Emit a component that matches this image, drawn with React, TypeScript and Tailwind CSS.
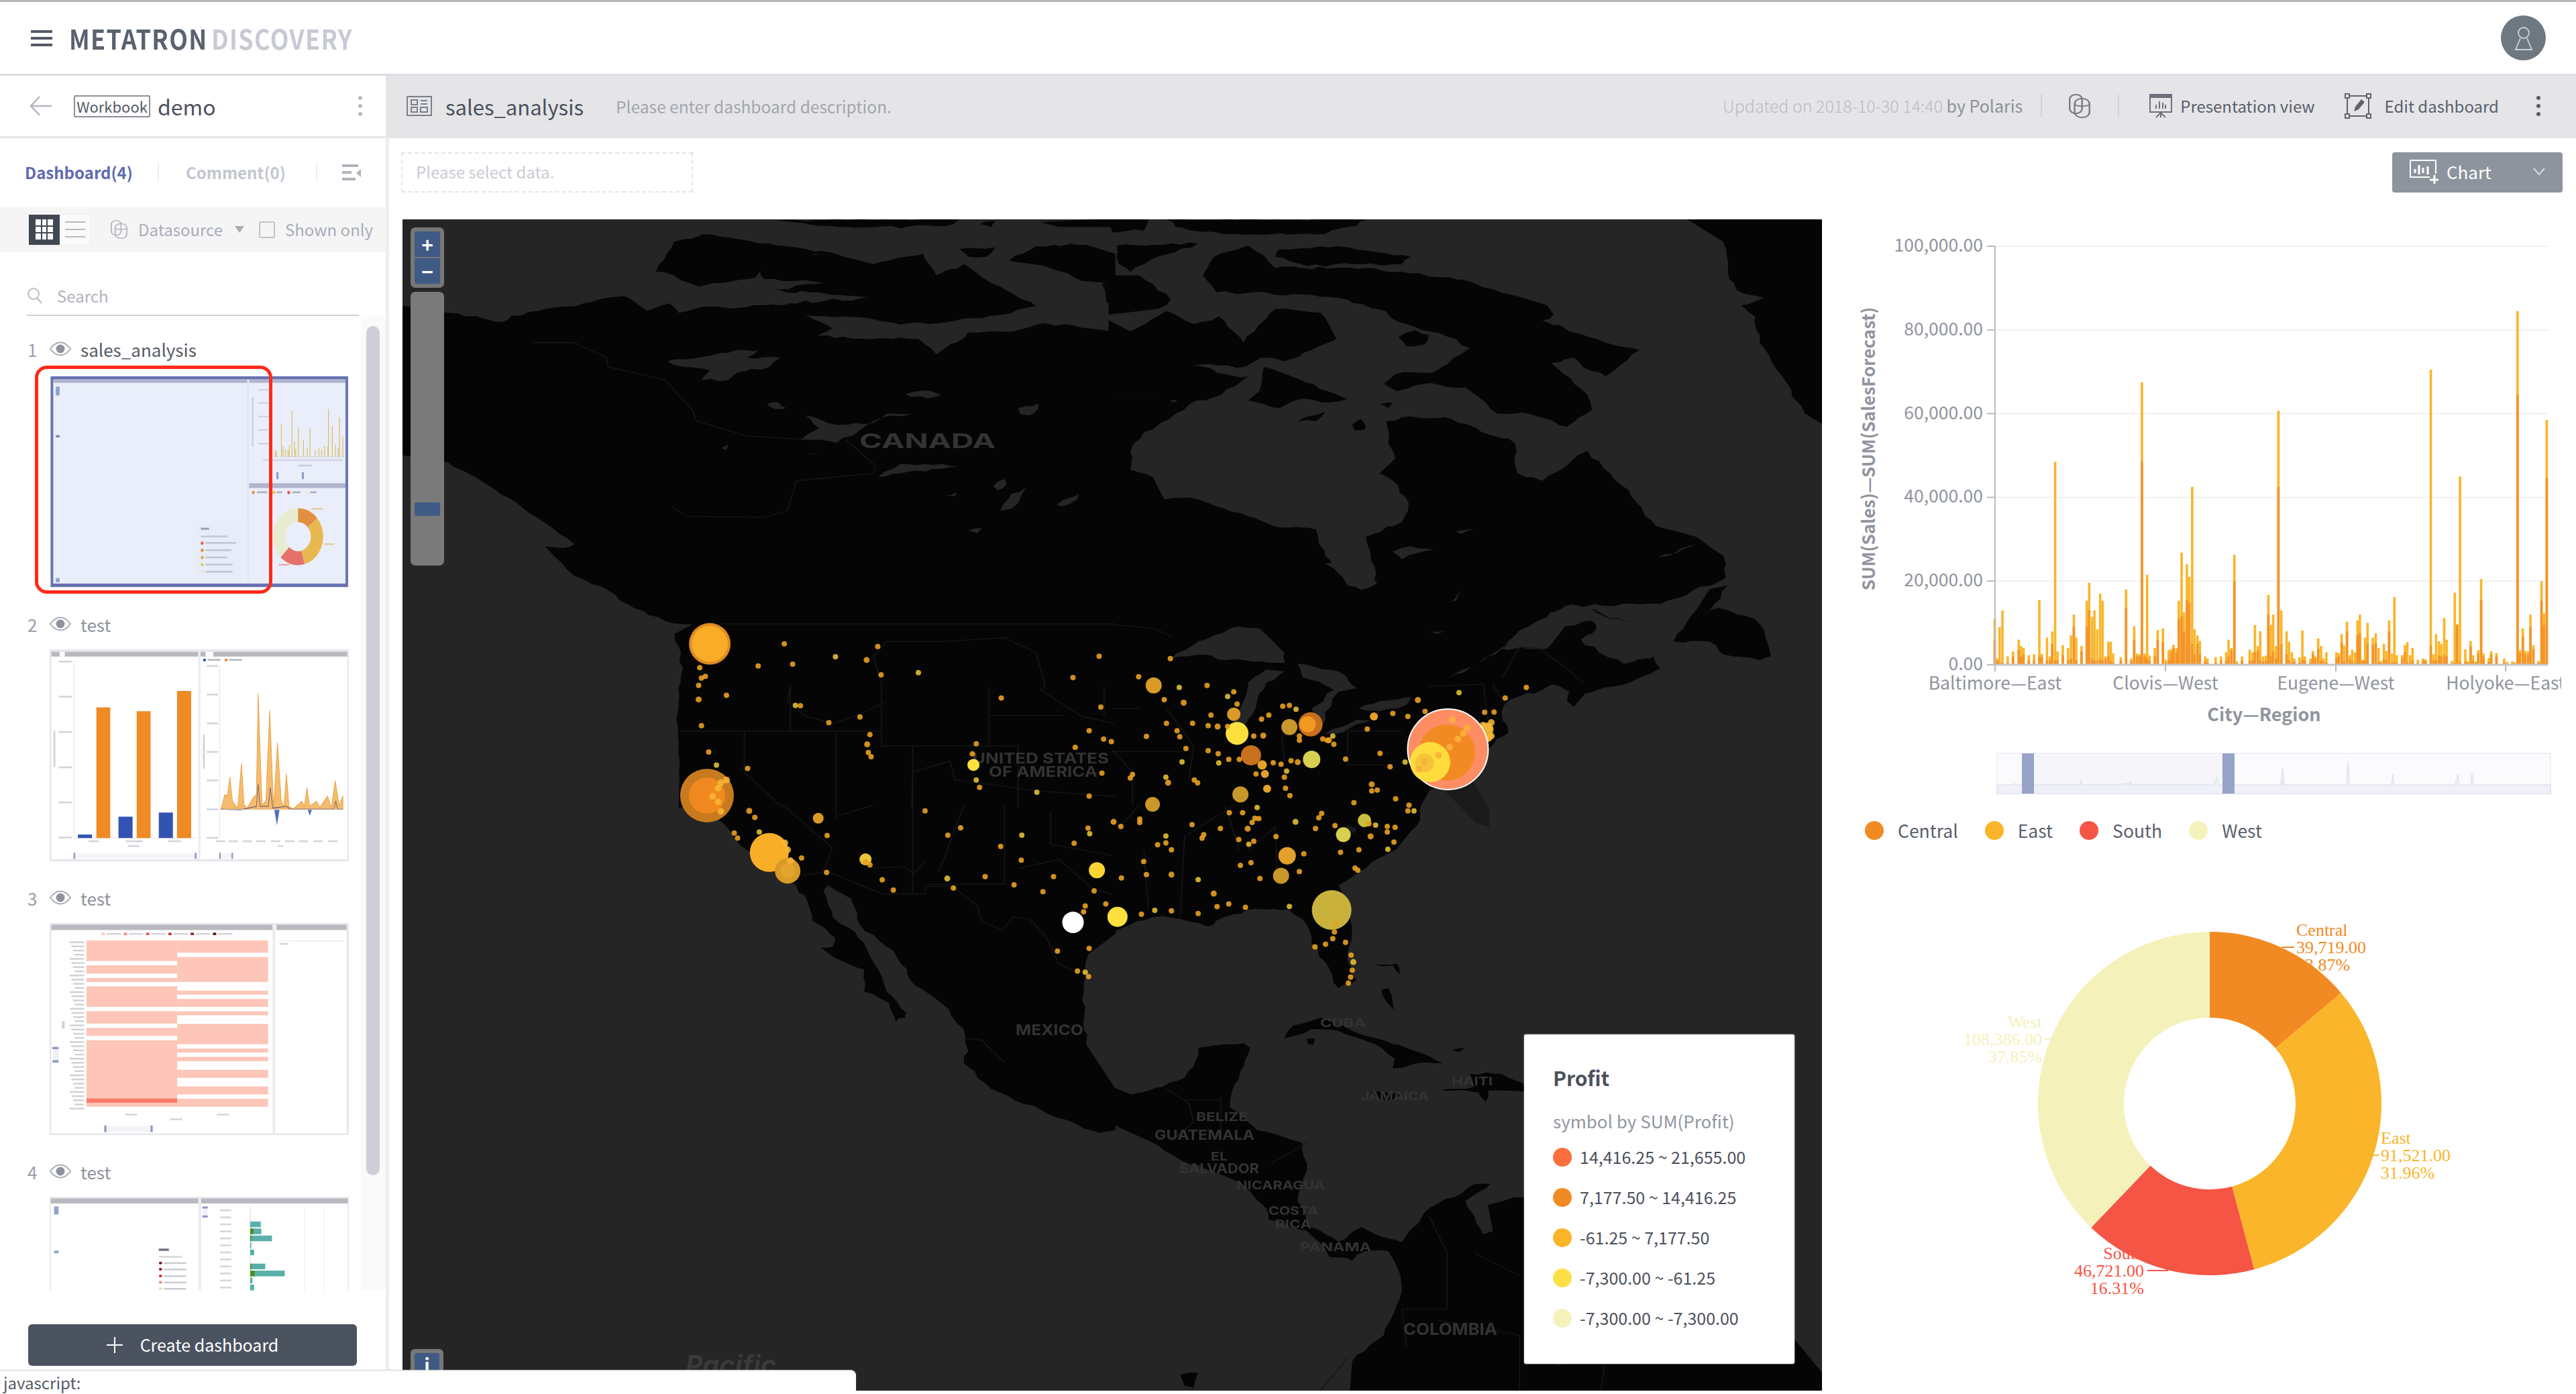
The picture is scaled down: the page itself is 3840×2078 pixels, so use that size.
import React from "react";

/* ---------- small icons ---------- */
const Kebab = ({ c = "#b9bcc4" }: { c?: string }) => (
  <svg width="10" height="30" viewBox="0 0 10 30"><circle cx="5" cy="3" r="3" fill={c} /><circle cx="5" cy="15" r="3" fill={c} /><circle cx="5" cy="27" r="3" fill={c} /></svg>
);
const Eye = () => (
  <svg width="32" height="22" viewBox="0 0 32 22" fill="none"><path d="M1 11C6 4 11 1.500 16 1.500S26 4 31 11C26 18 21 20.500 16 20.500S6 18 1 11Z" stroke="#a9adb6" strokeWidth="2" /><circle cx="16" cy="11" r="6.500" fill="#8e929c" /></svg>
);
const Cyl = ({ c, w = 26, h = 36 }: { c: string; w?: number; h?: number }) => (
  <svg width={w} height={h} viewBox="0 0 26 36" preserveAspectRatio="none" fill="none" stroke={c} strokeWidth="2"><rect x="1" y="1" width="15" height="28" rx="7" /><rect x="7" y="7" width="18" height="28" rx="8" fill="none" /><path d="M7 16c4 3 14 3 18 0" /></svg>
);

/* ---------- map data: traced per quadrant, in the coordinates of a 1568x1568 tracing ---------- */
const Q1_LAND = [
  "M-8 230 100 250 220 275 240 258 300 245 400 225 490 205 540 245 590 225 610 250 660 235 760 235 850 228 900 262 950 292 915 312 1060 318 1140 320 1180 362 1250 302 1350 300 1420 278 1500 290 1575 300 1575 1575 610 1575 612 1500 605 1340 620 1200 600 1110 640 1085 580 1075 480 1020 470 1005 380 955 315 875 355 880 380 870 300 800 200 720 100 650 -8 630Z",
  "M560 140 600 60 680 40 830 70 950 90 890 100 800 125 780 155 700 170 655 180 600 150Z",
  "M790 135 850 100 950 90 1040 120 1150 92 1180 150 1240 120 1300 170 1400 232 1280 265 1100 282 1000 262 860 250 850 225 1030 210 900 195 810 190 930 170 800 160Z",
  "M830 4 1000 0 1230 0 1200 18 1000 22 900 14Z",
  "M1275 12 1310 4 1300 20Z M1410 8 1575 -4 1575 20 1450 20Z",
  "M1340 110 1400 72 1510 68 1575 92 1575 172 1500 165 1430 130Z",
  "M1230 80 1310 75 1290 100 1250 100Z",
  "M1545 172 1575 168 1575 245 1555 220Z",
];
const Q1_LAKES = [
  "M585 380 680 365 740 350 785 350 760 370 835 370 810 395 740 410 720 430 660 430 680 405 600 390Z",
  "M890 525 960 550 1040 545 1070 520 1125 520 1060 530 1010 565 960 598 880 590 920 560Z",
  "M1050 690 1100 655 1170 658 1230 662 1170 668 1100 680Z",
  "M805 495 830 490 848 505 825 508Z M1360 505 1405 492 1395 520 1365 522Z M1305 715 1330 695 1335 708 1315 725Z M1320 780 1345 735 1378 718 1360 760 1345 775Z M1195 742 1225 732 1220 742Z M1250 832 1280 826 1270 840Z M1445 765 1495 735 1490 750 1460 768Z M1110 468 1150 458 1190 470 1160 480Z M705 612 720 603 715 618Z M895 626 922 622 905 630Z",
];
const Q1_LINES = [
  "M290 330 380 330 450 370 455 395 580 430 640 510 650 540 760 580 900 590",
  "M980 590 1045 660 1040 680 870 700 850 780 800 798 630 795 595 770",
  "M1060 1250 1040 1170 1070 1130 1200 1130 1330 1120 1400 1160 1420 1250 1410 1260 1500 1330 1575 1350",
  "M857 1250 850 1290 890 1330 950 1350 1010 1325 1070 1290",
  "M700 1083 1575 1083",
  "M610 1370 1058 1370M857 1250 857 1370M755 1370 755 1480 840 1575M957 1370 957 1575M1058 1250 1058 1410 1360 1410 1360 1575M1295 1250 1295 1410M1295 1328 1460 1328M1127 1410 1127 1575M1550 1250 1550 1328",
  "M1125 1575 1127 1480 1210 1450 1220 1500 1400 1530 1575 1545",
];
const Q2_LAND = [
  "M-8 465 100 480 170 495 140 520 70 570 40 620 40 670 90 690 115 750 170 745 300 795 370 825 450 830 470 900 520 980 550 992 585 975 580 930 560 850 640 810 655 760 620 700 590 680 625 640 610 600 605 540 640 530 750 535 890 600 895 680 950 700 1050 620 1100 680 1160 760 1200 820 1290 850 1350 900 1355 960 1210 1030 1000 1035 940 1075 860 1150 885 1150 960 1150 1000 1090 1060 1075 1070 1095 1035 1125 1075 1160 1130 1190 1185 1175 1205 1205 1160 1230 1045 1270 1020 1305 1005 1290 1010 1265 975 1245 950 1260 880 1285 860 1320 875 1375 850 1390 830 1420 780 1500 700 1530 680 1575 -8 1575Z",
  "M1240 1130 1280 1060 1320 990 1360 980 1330 1030 1300 1060 1340 1040 1420 1070 1440 1100 1455 1170 1430 1180 1350 1165 1320 1130Z",
  "M1060 1045 1110 1050 1150 1078 1100 1070Z",
  "M1170 1200 1195 1170 1212 1205Z",
  "M1165 350 1090 420 1040 395 1020 370 970 385 1050 470 1060 510 1005 555 920 520 850 520 780 450 690 440 630 460 600 440 625 415 710 410 790 345 760 320 650 280 585 240 500 210 400 200 230 195 200 150 225 100 300 70 360 130 420 130 560 130 640 140 800 170 960 230 975 255 950 270 1090 330Z",
  "M360 100 370 80 500 72 660 100 640 120 530 120 430 125Z",
  "M-8 270 40 300 120 245 180 280 235 260 290 330 360 240 460 250 495 320 440 350 380 380 330 370 290 395 180 390 270 420 300 420 240 470 170 495 100 480 -8 465Z",
  "M335 395 395 420 475 460 520 480 480 490 420 480 370 505 300 485 325 460Z",
  "M410 540 470 515 450 540Z M530 550 550 535 560 560 535 565Z M590 495 620 490 610 505Z",
  "M10 70 190 65 100 100 40 140 15 120Z",
  "M120 0 560 0 540 18 450 40 250 40 140 20Z M-8 0 80 0 70 30 0 35Z",
  "M-8 150 60 150 130 215 100 240 -8 255Z",
  "M632 315 670 297 700 310 690 335 650 340Z",
  "M1265 -4 1575 -4 1575 552 1530 520 1480 420 1430 330 1420 260 1390 230 1440 210 1380 190 1360 140 1350 60Z",
];
const Q2_LAKES = [
  "M130 1175 190 1130 280 1090 325 1095 380 1160 382 1187 350 1187 250 1180 200 1165Z",
  "M262 1372 290 1290 300 1240 340 1205 380 1210 340 1240 320 1290 300 1340 280 1378Z",
  "M410 1190 500 1210 540 1255 500 1265 470 1320 465 1352 440 1310 490 1260 420 1225Z",
  "M470 1377 540 1340 572 1340 490 1378Z",
  "M545 1310 590 1290 662 1280 650 1300 590 1317Z",
  "M1000 1040 900 1100 860 1150 740 1232 830 1170 900 1120 960 1075Z",
  "M1065 1045 1110 1050 1150 1078 1100 1068Z",
  "M620 890 660 875 710 885 670 895 640 910Z M740 1030 775 988 760 1020Z M690 1105 735 1100 720 1110Z M1205 905 1290 870 1230 900Z M760 835 800 828 770 842Z M470 920 510 915 515 930 490 935Z",
];
const Q2_LINES = [
  "M0 1085 90 1095 130 1115M700 1250 820 1245M820 1245 830 1340M840 1245 870 1300M0 1310 60 1310",
  "M1040 1240 990 1190 945 1150 900 1145 860 1230",
  "M120 1310 180 1410 170 1500M0 1425 160 1425M380 1450 375 1380 440 1380M520 1370 640 1370M520 1370 520 1460 620 1460M45 1568 45 1480 0 1420",
];
const Q3_LAND = [
  "M700 -6 1575 -6 1575 345 1515 400 1505 500 1510 640 1575 760 1575 870 1540 878 1430 830 1320 770 1270 730 1240 690 1250 660 1240 600 1190 530 1120 465 1115 440 1070 380 1010 320 990 250 940 215 930 230 950 300 1000 340 1040 420 1070 500 1112 555 1110 570 1090 580 1075 530 1020 500 1020 440 975 420 925 382 950 380 955 355 905 310 895 260 870 215 850 200 760 120 700 40Z",
];
const Q3_LINES = [
  "M870 190 940 178 1060 238 1155 238 1155 218 1215 218 1270 270 1280 310 1325 335 1350 300 1385 305 1420 350 1450 425 1490 450",
  "M840 0 950 115 930 175M957 0 957 40M1127 0 1127 238M1330 0 1330 212 1155 212M1432 20 1432 105 1568 135",
  "M960 30 1040 0M1020 170 1110 165 1130 185 1155 150M1185 180 1240 0M1360 170 1450 145 1520 220 1568 240M1240 625 1280 630 1330 690",
];
const Q4_LAND = [
  "M-8 -6 680 -6 680 40 640 100 610 130 560 170 500 215 530 330 520 400 540 470 500 490 470 420 440 370 430 320 390 280 300 280 230 310 210 325 150 305 90 300 40 320 -8 345Z",
  "M-8 750 40 775 110 755 160 730 180 700 190 650 290 638 305 650 290 700 265 765 260 810 320 870 420 905 430 960 410 1060 440 1130 500 1170 550 1130 640 1170 700 1080 800 1015 835 1015 780 1060 810 1130 840 1145 830 1070 900 1050 1000 1050 1500 1420 1575 1530 1575 1575 525 1575 530 1490 600 1420 640 1300 630 1240 610 1195 560 1195 530 1220 480 1210 430 1140 345 1110 340 1080 280 1010 230 985 150 950 100 910 -8 850Z",
  "M380 625 400 590 460 570 540 610 600 630 650 650 732 690 660 695 620 705 625 680 580 640 500 605 440 600Z",
  "M725 765 800 755 790 720 860 720 915 750 915 768 830 765 825 795 810 770Z",
  "M570 768 640 772 620 790 585 785Z M595 495 610 490 622 548 605 525Z M430 625 448 625 445 642 432 640Z M150 1525 190 1520 180 1560 160 1555Z M750 655 780 650 765 662Z M580 428 630 425 635 455 620 430Z",
];
const Q4_LINES = [
  "M-8 0 M15 60 60 0M70 120 80 280M150 300 160 80M165 80 270 0M250 0 280 120M365 200 360 60 300 120M120 760 170 800 180 850 130 900M240 780 240 880M160 790 240 790",
  "M350 960 430 905M700 1100 740 1200 740 1350 640 1350 650 1450M800 1200 900 1260M720 1380 900 1420 900 1568M460 1568 520 1480M980 1500 1090 1480 1080 1568",
];
const Q4_LAKE = "M810 1120 825 1090 838 1140 820 1150Z";

const LANDSCALE_X = 1058 / 1568;
const LANDSCALE_Y = 873 / 1568;

/* breaks the straight traced edges into short jittered steps, so a coast looks like a coast */
const rough = (d: string) => {
  let seed = 7;
  const rnd = () => {
    seed = (seed * 16807) % 2147483647;
    return seed / 2147483647 - 0.5;
  };
  return d
    .split("M")
    .filter((s) => s.trim())
    .map((sub) => {
      const n = sub.replace("Z", "").trim().split(/\s+/).map(Number);
      const pts: number[][] = [];
      for (let i = 0; i + 1 < n.length; i += 2) pts.push([n[i], n[i + 1]]);
      const out: string[] = [];
      pts.forEach((p, i) => {
        const q = pts[(i + 1) % pts.length];
        const len = Math.hypot(q[0] - p[0], q[1] - p[1]);
        const steps = Math.max(1, Math.ceil(len / 22));
        const onEdge = p[0] < -5 || p[0] > 1570 || q[0] < -5 || q[0] > 1570 || p[1] > 1570 || q[1] > 1570 || p[1] < 0 || q[1] < 0;
        for (let k = 0; k < steps; k++) {
          const t = k / steps;
          const j = k === 0 || onEdge ? 0 : 9;
          out.push(`${p[0] + (q[0] - p[0]) * t + rnd() * j} ${p[1] + (q[1] - p[1]) * t + rnd() * j}`);
        }
      });
      return `M${out.join(" ")}Z`;
    })
    .join("");
};

const Quad = ({ x, y, land, lakes = [], lines = [] }: { x: number; y: number; land: string[]; lakes?: string[]; lines?: string[] }) => (
  <g transform={`translate(${x} ${y}) scale(${LANDSCALE_X} ${LANDSCALE_Y})`}>
    {land.map((d, i) => <path key={i} d={rough(d)} fill="#050505" />)}
    {lakes.map((d, i) => <path key={i} d={rough(d)} fill="#252525" />)}
    {lines.map((d, i) => <path key={i} d={d} fill="none" stroke="#161616" strokeWidth="2.500" />)}
  </g>
);

/* dots traced on a (1.206, 2.45)-scaled crop whose origin is page (1000,880) */
const DOTS: number[][] = [[204,193],[372,203],[296,240],[352,252],[770,238],[898,247],[157,274],[219,267],[378,306],[445,298],[52,280],[55,318],[62,312],[50,345],[50,396],[100,381],[224,418],[233,419],[284,481],[340,460],[358,524],[55,492],[68,588],[82,636],[138,648],[353,560],[355,590],[360,605],[549,558],[542,595],[549,690],[555,717],[594,391],[723,316],[841,313],[887,397],[922,408],[914,352],[964,345],[773,424],[752,510],[778,541],[792,550],[727,571],[658,735],[752,749],[457,803],[141,803],[151,827],[114,884],[120,902],[159,880],[281,893],[235,975],[280,1028],[380,1055],[400,1092],[508,1085],[497,1050],[565,1043],[617,1073],[669,1098],[688,1043],[593,933],[630,983],[631,892],[521,865],[498,892],[725,921],[796,843],[809,860],[750,866],[753,886],[843,833],[843,845],[855,531],[830,670],[826,683],[775,665],[890,680],[894,700],[941,690],[947,701],[910,510],[915,532],[926,575],[919,624],[891,483],[938,483],[971,453],[966,492],[983,495],[1001,495],[1001,385],[1012,368],[1018,413],[1062,468],[1075,453],[1100,421],[1112,418],[1124,432],[1048,530],[1065,528],[1130,530],[1130,545],[966,583],[984,594],[985,628],[1003,615],[1022,615],[1083,627],[1097,633],[1115,620],[1127,625],[1107,658],[1103,680],[1052,668],[1105,720],[1113,747],[1004,810],[1028,810],[1054,791],[1050,830],[1045,845],[1037,868],[1057,831],[1021,908],[1048,914],[1039,925],[1043,992],[1024,1002],[1059,1050],[1130,1025],[1138,960],[1088,897],[1123,843],[1165,828],[1170,812],[1159,867],[1194,857],[1228,773],[1255,850],[1267,855],[1288,860],[1288,880],[1302,863],[1258,896],[1300,917],[1237,945],[1289,943],[1204,954],[1230,1012],[1235,1020],[1213,614],[1275,593],[1293,642],[1320,625],[1260,706],[1260,730],[1270,727],[1303,759],[1327,782],[1325,803],[1336,803],[1252,504],[1262,458],[1298,447],[1325,458],[1343,398],[1356,440],[1417,371],[1463,443],[1480,442],[1500,391],[1538,352],[1172,540],[1180,545],[1190,530],[1192,560],[1183,545],[937,853],[988,867],[958,890],[955,903],[890,895],[890,920],[875,927],[900,945],[850,988],[855,1036],[900,1036],[948,1054],[810,1048],[761,1095],[782,1143],[745,1150],[742,1172],[846,1180],[870,1166],[900,1168],[948,1178],[976,1105],[1003,1143],[982,1153],[1033,1155],[1112,1152],[1193,1245],[1190,1270],[1213,1283],[1177,1290],[1158,1300],[1223,1330],[1227,1355],[1225,1385],[1222,1410],[1218,1432],[695,1315],[752,1305],[731,1388],[745,1392],[751,1408],[1195,1215],[358,1000],[350,990]];
/* [zx, zy, radius, colour] */
const BIG: [number, number, number, string][] = [
  [70,193,31,"#e08a20"],[70,193,27,"#f8ac28"],
  [65,747,40,"#c87a1e"],[65,747,27,"#f0891f"],
  [177,955,29,"#f9ae28"],[210,1022,19,"#d99a27"],[210,1022,11,"#e3a52c"],
  [1188,1165,29.500,"#c9b23c"],[723,1210,16,"#ffffff"],[803,1190,15,"#fde03d"],
  [1018,520,17,"#fde03d"],[1150,487,18,"#c8701e"],[1145,487,12,"#f09a20"],[1043,600,15,"#c8701e"],
  [868,345,12,"#d99a27"],[1012,450,10,"#d99a27"],[1112,497,12,"#c9982a"],[866,779,11,"#c9982a"],[1024,743,12,"#c9982a"],
  [1152,615,13,"#d8d050"],[1308,690,14,"#e3a02a"],[1247,838,10,"#c9c040"],[1209,890,11,"#d8d050"],
  [1108,967,13,"#e3a02a"],[1097,1040,12,"#c9982a"],[766,1020,12,"#fcd535"],[1467,505,10,"#e6b030"],[1467,530,9,"#e6b030"],
  [544,635,9,"#fde03d"],[350,980,9,"#e8c835"],[265,830,8,"#d99a27"],[1063,635,7,"#e3a02a"],[1068,668,6,"#e3a02a"],[1072,722,6,"#e3a02a"],[1264,458,6,"#e3a02a"],
];
const EXTRA: number[][] = [[1460,490],[1470,500],[1475,480],[1460,520],[1475,530],[1465,540],[205,920],[210,945],[215,985],[90,700],[100,690],[85,720],[75,750],[85,770],[90,805]];
const NYC_OVER: number[][] = [[1405,470],[1432,500],[1425,520],[1415,540],[1400,570],[1380,600],[1355,625],[1345,650]];
const mx = (zx: number) => zx / 1.206 + 400;
const my = (zy: number) => zy / 2.45 + 554;

const LABELS: [string, number, number, number, number][] = [
  ["CANADA", 681, 341, 203, 30],
  ["UNITED STATES", 850, 811, 203, 21],
  ["OF AMERICA", 874, 831, 162, 21],
  ["MEXICO", 914, 1216, 101, 22],
  ["CUBA", 1368, 1204, 68, 18],
  ["HAITI", 1564, 1291, 61, 18],
  ["JAMAICA", 1429, 1313, 101, 18],
  ["BELIZE", 1183, 1344, 77, 18],
  ["GUATEMALA", 1121, 1372, 149, 20],
  ["EL", 1205, 1403, 25, 18],
  ["SALVADOR", 1158, 1422, 119, 20],
  ["NICARAGUA", 1243, 1446, 132, 18],
  ["COSTA", 1291, 1484, 74, 18],
  ["RICA", 1301, 1504, 54, 18],
  ["PANAMA", 1338, 1538, 106, 18],
  ["COLOMBIA", 1492, 1663, 140, 24],
];

const NorthAmerica = () => (
  <svg className="absolute left-0 top-0" width="2116" height="1746" viewBox="0 0 2116 1746">
    <defs>
      <filter id="soft" colorInterpolationFilters="sRGB"><feGaussianBlur stdDeviation="0.700" colorInterpolationFilters="sRGB" /></filter>
    </defs>
    <rect width="2116" height="1746" fill="#252525" />
    <Quad x={0} y={0} land={Q1_LAND} lakes={Q1_LAKES} />
    <Quad x={1058} y={0} land={Q2_LAND} lakes={Q2_LAKES} />
    <Quad x={0} y={873} land={Q3_LAND} />
    <Quad x={1058} y={873} land={Q4_LAND} lakes={[Q4_LAKE]} />
    <Quad x={0} y={0} land={[]} lines={Q1_LINES} />
    <Quad x={1058} y={0} land={[]} lines={Q2_LINES} />
    <Quad x={0} y={873} land={[]} lines={Q3_LINES} />
    <Quad x={1058} y={873} land={[]} lines={Q4_LINES} />
    <ellipse cx="1408" cy="910" rx="14" ry="6" fill="#1a1a1a" />
    <path d="M1556 855 1580 810 1620 880 1620 905 1600 900 1572 870Z" fill="#1a1a1a" />
    <g filter="url(#soft)" fontWeight="700" fill="#333333">
      {LABELS.map(([t, x, y, w, s]) => (
        <text key={t} x={x} y={y} fontSize={s} textLength={w} lengthAdjust="spacingAndGlyphs" fontFamily="Inter, sans-serif">{t}</text>
      ))}
      <text x="422" y="1722" fontSize="40" fontStyle="italic" fill="#3a3a3a" textLength="135" lengthAdjust="spacingAndGlyphs" fontFamily="Inter, sans-serif">Pacific</text>
    </g>
    <g filter="url(#soft)">
      {BIG.filter((b) => b[0] < 1300 || b[0] > 1400).map((b, i) => <circle key={i} cx={mx(b[0])} cy={my(b[1])} r={b[2]} fill={b[3]} />)}
      {DOTS.map((d, i) => <circle key={i} cx={mx(d[0])} cy={my(d[1])} r={i % 11 === 3 ? 4.500 : 4} fill={i % 7 === 2 ? "#e0bf30" : "#e8a020"} opacity="0.9" />)}
      {EXTRA.map((d, i) => <circle key={i} cx={mx(d[0])} cy={my(d[1])} r="5" fill="#f9b936" opacity="0.85" />)}
      <circle cx={mx(1397)} cy={my(578)} r="60" fill="#fe8d63" stroke="#ffffff" strokeWidth="2" />
      <circle cx={mx(1395)} cy={my(590)} r="42" fill="#f28a24" />
      <circle cx={mx(1365)} cy={my(625)} r="30" fill="#fde03d" opacity="0.95" />
      <circle cx={mx(1355)} cy={my(628)} r="14" fill="#f5c43a" />
      {NYC_OVER.map((d, i) => <circle key={i} cx={mx(d[0])} cy={my(d[1])} r="5" fill="#f9b03a" opacity="0.9" />)}
    </g>
  </svg>
);

/* ---------- bar chart ---------- */
const SPIKES: [number, number, number][] = [
  [355,11,6],[360,1.5,1],[365,9,.5],[371,13,.5],[382,2,.5],[393,3.200,2],[405,6,3.500],[410,4.500,2],[415,4,2.500],[426,2.300,1],[437,2.500,1],[448,15.500,2],[453,2.600,1.800],[464,6.500,1],[470,2,1],[475,8,5],[481,48.500,1],[486,3.200,1],[497,4.700,2.300],[508,4,1],[514,7,1.500],[520,12,9],[525,6.500,1],[536,4.500,3.200],
  [547,15.300,9],[552,19.600,13],[558,11.500,1.500],[563,13,1],[569,8.500,1],[575,17,1.500],[580,15.300,1],[586,2,1.500],[592,5.500,2],[597,5.500,.8],[602,2.700,.5],[618,1.800,1],[629,18,13.500],[640,1.500,1],[646,9.200,6],[652,2.700,2],[657,2.500,2],[662,67.500,48.500],[668,2.700,2],[673,21.500,1.500],[678,2.200,1],
  [689,4,2],[695,8.300,6],[706,8.700,5.500],[712,1.200,.5],[718,3.500,1],[723,3.700,3],[728,4.800,4],[734,4,3],[739,15.300,11],[745,26.800,11.500],[750,12.500,8],[756,24,15.500],[761,21,14.800],[767,42.500,5],[772,8.500,2.500],[778,7,5],[783,5.700,2.500],
  [794,2,.8],[799,1.500,.5],[816,1.800,.5],[827,2,1],[838,3,1],[843,6,2],[849,4,3.500],[855,26.300,20],[860,.8,.3],[871,2,1],[887,3.600,1],[893,3,1],[898,9.500,3],[904,4.500,3.300],[909,8,1],[915,2,.8],[921,2.200,1],[926,16.700,12],[931,9.500,2],[936,12,3.200],[942,4.500,1.500],[947,60.700,42.500],[953,13,5],[964,8,2.500],[969,5.500,1],[975,3,.5],[980,1.500,.8],
  [991,1.800,.5],[997,8.200,1.200],[1002,2,1],[1014,1.500,.5],[1019,3.300,2.500],[1024,2,1.500],[1030,6.300,3.800],[1036,4.500,1],[1041,1.500,.7],[1047,3,.5],[1068,3,1.500],[1073,2.800,2],[1079,7.300,5.300],[1084,4.600,.8],[1090,10.300,8],[1096,2.300,1.300],[1101,3.600,.8],[1107,3,.5],[1112,10.600,7],[1117,12,7.500],[1123,1.200,1],[1128,6.500,1],[1133,10,5],[1144,6.500,4.700],[1150,7.500,5.200],[1156,4,.7],[1161,.9,.5],[1167,5,1.300],[1172,3.300,1],[1178,10.600,8],[1184,2.700,.5],[1189,16.200,.7],[1194,2.300,.5],[1205,2.300,1.500],[1211,4.700,3],[1216,5.400,.5],[1222,2.300,.5],[1227,4,1],
  [1238,1.200,.4],[1249,1.500,1],[1254,1.300,.8],[1265,70.500,4.500],[1271,2.500,1],[1276,7.300,1],[1282,5.600,2.200],[1287,5,2],[1293,11.200,2.300],[1298,6,2],[1309,.9,.3],[1315,17.200,.5],[1320,9.700,9.400],[1326,45,.8],[1337,3.700,.7],[1342,.9,.5],[1348,5.700,4.300],[1353,2.300,1],[1359,.8,.4],[1364,3.500,2.700],[1370,20.500,15.500],[1375,2.700,2],[1386,1.600,.7],[1391,3.200,2.400],[1402,2.800,2],[1418,1.500,.6],[1424,.7,.3],[1435,.8,.3],
  [1440,.6,.2],[1446,84.500,64.500],[1451,3.500,2.800],[1457,8.700,6.700],[1462,3.300,2.700],[1468,3.200,2.500],[1473,12,9],[1479,4.700,3.700],[1490,.9,.5],[1496,20,15.300],[1501,12.300,9.500],[1507,58.500,44.500],
];
const cx = (zx: number) => 2720 + zx / 1.4;
const cy = (k: number) => 990 - k * 6.24;

const YTICKS = ["100,000.00", "80,000.00", "60,000.00", "40,000.00", "20,000.00", "0.00"];
const XTICKS: [string, number][] = [["Baltimore—East", 2974], ["Clovis—West", 3228], ["Eugene—West", 3482], ["Holyoke—East", 3735]];

const MainChart = () => (
  <svg className="block" width="1124" height="874" viewBox="2716 326 1124 874">
    <defs><clipPath id="xclip"><rect x="2716" y="990" width="1102" height="60" /></clipPath></defs>
    {YTICKS.map((t, i) => {
      const y = 366 + i * 124.800;
      return (
        <g key={t}>
          {i < 5 && <line x1="2974" x2="3798" y1={y} y2={y} stroke="#f1f1f3" strokeWidth="2" />}
          <line x1="2962" x2="2974" y1={y} y2={y} stroke="#b8bbc2" strokeWidth="2" />
          <text x="2956" y={y + 8} textAnchor="end" fontSize="26.500" fill="#90949d">{t}</text>
        </g>
      );
    })}
    {SPIKES.map(([z, v, o], i) => (
      <g key={i}>
        <rect x={cx(z) - 1.800} y={cy(v)} width="3.600" height={v * 6.24} fill="#fab52a" />
        <rect x={cx(z) - 1.800} y={cy(o)} width="3.600" height={o * 6.24} fill="#f39428" />
      </g>
    ))}
    <line x1="2974" x2="2974" y1="366" y2="990" stroke="#b8bbc2" strokeWidth="2" />
    <line x1="2974" x2="3798" y1="990" y2="990" stroke="#c6c8ce" strokeWidth="3" />
    <g clipPath="url(#xclip)">
      {XTICKS.map(([t, x]) => (
        <g key={t}>
          <line x1={x} x2={x} y1="990" y2="1000" stroke="#b8bbc2" strokeWidth="2" />
          <text x={x} y="1027" textAnchor="middle" fontSize="26.500" fill="#90949d">{t}</text>
        </g>
      ))}
    </g>
    <text transform="translate(2795 668) rotate(-90)" textAnchor="middle" fontSize="26" fontWeight="700" fill="#90949d">SUM(Sales)—SUM(SalesForecast)</text>
    <text x="3375" y="1074" textAnchor="middle" fontSize="27" fontWeight="700" fill="#90949d">City—Region</text>
    <rect x="2977" y="1122" width="825" height="60" fill="#fbfbfd" stroke="#ebecf4" strokeWidth="1.500" />
    <rect x="3023" y="1123" width="299" height="58" fill="#f5f5fa" />
    <path d="M2977 1169 3000 1169 3003 1167 3006 1169 3100 1169 3102 1162 3104 1169 3150 1169 3172 1167 3176 1169 3175 1169 3176 1163 3177 1169 3197 1169 3176 1169 3300 1169 3305 1158 3307 1169 3400 1169 3403 1166 3405 1169 3398 1169 3400 1169 3403 1144 3405 1169 3498 1169 3500 1133 3502 1169 3565 1169 3567 1152 3569 1169 3660 1169 3664 1153 3666 1169 3683 1169 3685 1152 3687 1169 3802 1169 3802 1182 2977 1182Z" fill="#f0f0f8" stroke="#e2e2ea" strokeWidth="1.500" />
    <rect x="3014" y="1122" width="18" height="60" fill="#97a3c7" />
    <rect x="3313" y="1122" width="18" height="60" fill="#97a3c7" />
  </svg>
);

const polar = (r: number, f: number) => {
  const a = f * Math.PI * 2;
  return [3294 + r * Math.sin(a), 1644 - r * Math.cos(a)];
};
const arc = (from: number, to: number, R = 256, r = 128) => {
  const [x1, y1] = polar(R, from), [x2, y2] = polar(R, to), [x3, y3] = polar(r, to), [x4, y4] = polar(r, from);
  const big = to - from > 0.5 ? 1 : 0;
  return `M${x1} ${y1}A${R} ${R} 0 ${big} 1 ${x2} ${y2}L${x3} ${y3}A${r} ${r} 0 ${big} 0 ${x4} ${y4}Z`;
};
const PIE: [number, number, string][] = [[0, .1387, "#f28a24"], [.1387, .4583, "#fab52a"], [.4583, .6214, "#f55545"], [.6214, 1, "#f5f1bb"]];
const PIE_LABELS: [string, number, number, string, "start" | "end"][] = [
  ["Central", 3423, 1394, "#f28a24", "start"], ["39,719.00", 3423, 1420, "#f28a24", "start"], ["13.87%", 3423, 1446, "#f28a24", "start"],
  ["East", 3549, 1704, "#fab52a", "start"], ["91,521.00", 3549, 1730, "#fab52a", "start"], ["31.96%", 3549, 1756, "#fab52a", "start"],
  ["South", 3196, 1876, "#f55545", "end"], ["46,721.00", 3196, 1902, "#f55545", "end"], ["16.31%", 3196, 1928, "#f55545", "end"],
  ["West", 3044, 1531, "#f5f1bb", "end"], ["108,386.00", 3044, 1557, "#f5f1bb", "end"], ["37.85%", 3044, 1583, "#f5f1bb", "end"],
];
const Donut = () => (
  <svg className="block" width="1124" height="800" viewBox="2716 1278 1124 800">
    {PIE_LABELS.map(([t, x, y, c, a]) => (
      <text key={t} x={x} y={y} fontSize="26" fill={c} textAnchor={a} fontFamily="'Liberation Serif', serif">{t}</text>
    ))}
    <line x1="3402" x2="3420" y1="1411" y2="1411" stroke="#f28a24" strokeWidth="2" />
    <line x1="3537" x2="3546" y1="1721" y2="1721" stroke="#fab52a" strokeWidth="2" />
    <line x1="3201" x2="3232" y1="1893" y2="1893" stroke="#f55545" strokeWidth="2" />
    <line x1="3047" x2="3056" y1="1548" y2="1548" stroke="#f5f1bb" strokeWidth="2" />
    {PIE.map(([a, b, c]) => <path key={c} d={arc(a, b)} fill={c} />)}
  </svg>
);

/* ---------- sidebar thumbnails ---------- */
const ThumbOne = () => (
  <svg className="block" width="446" height="316" viewBox="193 118 1165 619" preserveAspectRatio="none">
    <rect x="193" y="118" width="1165" height="619" fill="#f4f4f7" />
    <rect x="202" y="125" width="1148" height="605" fill="#e9eefa" stroke="#6771b2" strokeWidth="10" />
    <rect x="208" y="128" width="755" height="11" fill="#aeb5cc" />
    <rect x="970" y="128" width="375" height="11" fill="#aeb5cc" />
    <rect x="970" y="432" width="375" height="14" fill="#aeb5cc" />
    <rect x="963" y="128" width="5" height="598" fill="#dde3f2" />
    <rect x="217" y="150" width="15" height="26" rx="2" fill="#8da3cf" />
    <rect x="217" y="292" width="15" height="6" fill="#6f7fa8" />
    <rect x="217" y="709" width="15" height="12" fill="#8da3cf" />
    <rect x="770" y="545" width="170" height="170" fill="#e2e7f4" opacity="0.25" />
    <rect x="782" y="562" width="32" height="6" fill="#9aa0ae" />
    <rect x="782" y="585" width="105" height="5" fill="#c4c9d6" />
    {[["#e27055", 607, 120], ["#e19341", 628, 100], ["#dfb14a", 649, 85], ["#ddd15c", 670, 105], ["#e8e8c4", 691, 105]].map(([c, y, w]) => (
      <g key={c as string}>
        <ellipse cx="787" cy={y as number} rx="6" ry="5" fill={c as string} />
        <rect x="800" y={(y as number) - 3} width={w as number} height="5" fill="#c0c5d3" />
      </g>
    ))}
    <line x1="1052" x2="1340" y1="355" y2="355" stroke="#c8ccd8" strokeWidth="1.500" />
    {[[1094,95],[1135,135],[1160,85],[1205,85],[1277,140],[1292,90],[1320,115],[1333,60],[1070,20],[1100,30],[1110,22],[1145,45],[1180,50],[1240,25],[1262,32],[1305,36],[1075,15],[1120,20],[1150,24],[1195,28],[1225,20],[1250,22],[1275,30],[1315,25],[1125,34]].map(([x, h], i) => (
      <rect key={i} x={x} y={355 - h} width="3" height={h} fill="#dcbc5a" />
    ))}
    {[157, 195, 235, 274, 314].map((y) => <rect key={y} x="1005" y={y} width="42" height="5" fill="#d0d5e2" />)}
    <rect x="980" y="180" width="7" height="145" fill="#cfd4e1" />
    <rect x="1025" y="362" width="310" height="5" fill="#d0d5e2" />
    <rect x="1160" y="378" width="55" height="5" fill="#c8cddb" />
    <rect x="1076" y="400" width="8" height="20" fill="#8e9bbf" />
    <rect x="1175" y="400" width="8" height="20" fill="#8e9bbf" />
    {[["#df9a3a", 986, 1000, 40], ["#e9c64e", 1066, 1077, 22], ["#e05f55", 1124, 1138, 32], ["#eaeacb", 1193, 1207, 26]].map(([c, a, b, w]) => (
      <g key={c as string}>
        <ellipse cx={a as number} cy="459" rx="6" ry="5" fill={c as string} />
        <rect x={b as number} y="456" width={w as number} height="5" fill="#a8aebd" />
      </g>
    ))}
    <g transform="translate(1160 588)">
      {[["#e09040", 0, .1387], ["#e8b94f", .1387, .4583], ["#e6716a", .4583, .6214], ["#e9ebd0", .6214, 1]].map(([c, a, b]) => {
        const P = (r: number, f: number) => [r * Math.sin(f * 6.2832), -r * Math.cos(f * 6.2832) * 0.85];
        const A = a as number, B = b as number, R = 98, r = 50;
        const [x1, y1] = P(R, A), [x2, y2] = P(R, B), [x3, y3] = P(r, B), [x4, y4] = P(r, A);
        return <path key={c as string} d={`M${x1} ${y1}A${R} ${R * .85} 0 ${B - A > .5 ? 1 : 0} 1 ${x2} ${y2}L${x3} ${y3}A${r} ${r * .85} 0 ${B - A > .5 ? 1 : 0} 0 ${x4} ${y4}Z`} fill={c as string} />;
      })}
    </g>
    <rect x="1212" y="505" width="45" height="4" fill="#e8c590" />
    <rect x="1262" y="608" width="40" height="4" fill="#e8c590" />
    <rect x="1085" y="668" width="40" height="4" fill="#eaa09a" />
  </svg>
);

const ThumbTwo = () => (
  <svg className="block" width="446" height="316" viewBox="193 918 1165 617" preserveAspectRatio="none">
    <rect x="193" y="918" width="1165" height="617" fill="#e6e7ea" />
    <rect x="200" y="925" width="1152" height="604" fill="#ffffff" />
    <rect x="200" y="925" width="572" height="14" fill="#b7b9bf" />
    <rect x="780" y="925" width="572" height="14" fill="#b7b9bf" />
    <rect x="772" y="925" width="8" height="604" fill="#ececef" />
    <rect x="232" y="925" width="20" height="14" fill="#ffffff" />
    <rect x="800" y="925" width="30" height="14" fill="#ffffff" />
    <line x1="288" x2="288" y1="952" y2="1467" stroke="#dcdde2" strokeWidth="2" />
    <line x1="288" x2="760" y1="1467" y2="1467" stroke="#dcdde2" strokeWidth="2" />
    {[953, 1055, 1158, 1261, 1363, 1465].map((y) => <rect key={y} x="228" y={y - 2} width="52" height="5" fill="#d2d4da" />)}
    <rect x="208" y="1155" width="7" height="105" fill="#cfd1d7" />
    <rect x="303" y="1457" width="55" height="10" fill="#3353b3" />
    <rect x="375" y="1087" width="54" height="380" fill="#ef8a24" />
    <rect x="461" y="1405" width="55" height="62" fill="#3353b3" />
    <rect x="532" y="1098" width="54" height="369" fill="#ef8a24" />
    <rect x="618" y="1393" width="55" height="74" fill="#3353b3" />
    <rect x="689" y="1039" width="55" height="428" fill="#ef8a24" />
    <rect x="345" y="1474" width="40" height="5" fill="#d2d4da" />
    <rect x="490" y="1474" width="66" height="5" fill="#d2d4da" />
    <rect x="655" y="1474" width="50" height="5" fill="#d2d4da" />
    <rect x="498" y="1488" width="44" height="5" fill="#d2d4da" />
    <rect x="298" y="1512" width="460" height="14" fill="#f3f4f8" />
    <rect x="286" y="1510" width="7" height="18" fill="#8e9bbf" />
    <rect x="758" y="1510" width="7" height="18" fill="#8e9bbf" />
    <ellipse cx="796" cy="949" rx="6" ry="4" fill="#3353b3" />
    <rect x="808" y="946" width="50" height="5" fill="#b5b8c0" />
    <ellipse cx="880" cy="949" rx="6" ry="4" fill="#ef8a24" />
    <rect x="892" y="946" width="50" height="5" fill="#b5b8c0" />
    <line x1="855" x2="855" y1="965" y2="1467" stroke="#dcdde2" strokeWidth="2" />
    {[966, 1049, 1133, 1216, 1299, 1383, 1466].map((y) => <rect key={y} x="805" y={y - 2} width="44" height="5" fill="#d2d4da" />)}
    <rect x="790" y="1165" width="7" height="100" fill="#cfd1d7" />
    <path d="M860 1383 875 1340 885 1345 895 1290 905 1360 925 1380 940 1250 950 1370 962 1380 985 1350 998 1340 1005 1045 1020 1370 1035 1360 1050 1095 1065 1380 1080 1190 1095 1360 1105 1375 1115 1280 1125 1375 1140 1383 1175 1360 1185 1375 1195 1320 1205 1372 1215 1370 1232 1360 1245 1378 1275 1345 1290 1378 1305 1300 1320 1372 1335 1345 1335 1383Z" fill="#f6bb6c" stroke="#e69a3a" strokeWidth="2" />
    <path d="M860 1383 935 1385 998 1375 1005 1310 1012 1375 1045 1375 1052 1320 1062 1380 1115 1375 1130 1383 1300 1383 1307 1360 1315 1383 1335 1383" fill="none" stroke="#55507a" strokeWidth="2" />
    <path d="M1068 1385 1078 1430 1088 1385Z" fill="#4d6fc0" /><path d="M1198 1385 1206 1402 1214 1385Z" fill="#4d6fc0" />
    <line x1="855" x2="1335" y1="1384" y2="1384" stroke="#cfd0d6" strokeWidth="1.500" />
    {[860, 910, 965, 1018, 1075, 1130, 1183, 1240, 1298].map((x) => <rect key={x} x={x - 20} y="1474" width="36" height="5" fill="#d2d4da" />)}
    <rect x="1082" y="1488" width="20" height="5" fill="#d2d4da" />
    <rect x="856" y="1512" width="48" height="14" fill="#f3f4f8" />
    <rect x="853" y="1510" width="6" height="18" fill="#8e9bbf" />
    <rect x="901" y="1510" width="6" height="18" fill="#8e9bbf" />
  </svg>
);

const HEAT_L: number[] = [267, 305, 330, 405, 455, 492];
const HEAT_R: number[] = [242, 330, 343, 368, 405, 430, 443, 517, 542, 568, 581, 618, 631, 668];
const ThumbThree = () => (
  <svg className="block" width="446" height="316" viewBox="90 153 537 637" preserveAspectRatio="none">
    <rect x="90" y="153" width="537" height="637" fill="#e6e7ea" />
    <rect x="93" y="158" width="530" height="627" fill="#ffffff" />
    <rect x="93" y="158" width="397" height="16" fill="#b7b9bf" />
    <rect x="497" y="158" width="126" height="16" fill="#b7b9bf" />
    <rect x="490" y="158" width="5" height="627" fill="#ececef" />
    <rect x="156" y="205" width="163" height="500" fill="#fdc6b8" />
    <rect x="319" y="205" width="163" height="500" fill="#fdc6b8" />
    {HEAT_L.map((y) => <rect key={y} x="156" y={y} width="163" height="13" fill="#ffffff" />)}
    {HEAT_R.map((y) => <rect key={y} x="319" y={y} width="163" height="13" fill="#ffffff" />)}
    <rect x="156" y="680" width="163" height="13" fill="#fb7a6a" />
    {Array.from({ length: 41 }, (_, i) => <rect key={i} x={126 + (i % 4) * 3} y={208 + i * 12.500} width={26 - (i % 4) * 3} height="5" fill="#cfd1d7" />)}
    {[0, 1, 2, 3, 4, 5].map((i) => <g key={i}><rect x={183 + i * 40} y="182" width="6" height="7" fill={["#fdc6b8", "#f58a7a", "#e0584a", "#c9332d", "#8a1f1f", "#5a0f14"][i]} /><rect x={192 + i * 40} y="183" width="26" height="5" fill="#d2d4da" /></g>)}
    <rect x="112" y="448" width="5" height="22" fill="#cfd1d7" />
    <rect x="96" y="525" width="10" height="50" fill="#eef0f6" />
    <rect x="95" y="525" width="11" height="7" fill="#8e9bbf" /><rect x="95" y="565" width="11" height="7" fill="#8e9bbf" />
    <rect x="225" y="726" width="22" height="5" fill="#d2d4da" /><rect x="390" y="726" width="22" height="5" fill="#d2d4da" /><rect x="306" y="740" width="22" height="5" fill="#d2d4da" />
    <rect x="190" y="763" width="84" height="18" fill="#f3f4f8" />
    <rect x="188" y="761" width="4" height="20" fill="#8e9bbf" /><rect x="271" y="761" width="4" height="20" fill="#8e9bbf" />
    <line x1="498" x2="620" y1="207" y2="207" stroke="#e4e5ea" strokeWidth="2" />
    <rect x="503" y="213" width="15" height="5" fill="#d2d4da" />
  </svg>
);

const TEAL: [number, number, number][] = [[1059, 19, 0], [1080, 20, 6], [1101, 39, 2], [1122, 2, 0], [1143, 7, 0], [1185, 27, 2], [1206, 62, 8], [1227, 4, 0], [1248, 7, 0]];
const ThumbFour = () => (
  <svg className="block" width="446" height="140" viewBox="90 977 537 281" preserveAspectRatio="none">
    <rect x="90" y="977" width="537" height="281" fill="#e6e7ea" />
    <rect x="92" y="982" width="533" height="276" fill="#ffffff" />
    <rect x="92" y="982" width="265" height="15" fill="#b7b9bf" /><rect x="360" y="982" width="265" height="15" fill="#b7b9bf" />
    <rect x="357" y="982" width="5" height="276" fill="#ececef" />
    <rect x="98" y="1006" width="8" height="24" fill="#8da3cf" /><rect x="98" y="1138" width="8" height="8" fill="#8da3cf" />
    <rect x="365" y="1006" width="8" height="32" fill="#eef0f6" /><rect x="364" y="1006" width="10" height="6" fill="#8e9bbf" /><rect x="364" y="1033" width="10" height="6" fill="#8e9bbf" />
    <rect x="286" y="1132" width="18" height="7" fill="#6d7380" /><rect x="286" y="1154" width="42" height="5" fill="#d5d7dc" />
    {[["#7a1020", 1175], ["#a3171f", 1194], ["#d12d22", 1214], ["#ee8b73", 1233], ["#f6d3b6", 1252]].map(([c, y]) => (
      <g key={y as number}><ellipse cx="289" cy={y as number} rx="3" ry="4" fill={c as string} /><rect x="295" y={(y as number) - 2} width="40" height="5" fill="#c9cbd2" /></g>
    ))}
    <line x1="450" x2="450" y1="1005" y2="1258" stroke="#dfe0e4" strokeWidth="1.500" />
    <line x1="548" x2="548" y1="1005" y2="1258" stroke="#f1f1f3" strokeWidth="1.500" /><line x1="582" x2="582" y1="1005" y2="1258" stroke="#f1f1f3" strokeWidth="1.500" />
    {[1017, 1038, 1059, 1080, 1101, 1122, 1143, 1164, 1185, 1206, 1227, 1248].map((y) => <rect key={y} x="396" y={y - 2} width="20" height="5" fill="#d2d4da" />)}
    {TEAL.map(([y, w, g]) => (
      <g key={y}><rect x="450" y={y - 8} width={w} height="17" fill="#58b0a8" /><rect x="450" y={y - 8} width={g} height="17" fill="#4b8d23" /></g>
    ))}
  </svg>
);

const ListItem = ({ n, name, active, children }: { n: number; name: string; active?: boolean; children: React.ReactNode }) => (
  <div className="pb-[34px]">
    <div className={`flex h-[40px] items-center pl-[41px] text-[26px] ${active ? "text-[#555b66]" : "text-[#8e929c]"}`}>
      <span className="w-[33px] text-[#9a9ea7]">{n}</span>
      <Eye />
      <span className="ml-[14px]">{name}</span>
    </div>
    <div className="relative ml-[74px] mt-[18px] w-[446px]">
      {children}
      {active && <div className="absolute left-[-22px] top-[-13px] h-[340px] w-[354px] rounded-[18px] border-[5px] border-[#ff2a1a]" />}
    </div>
  </div>
);

const Sidebar = () => (
  <aside className="flex w-[575px] shrink-0 flex-col bg-white">
    <div className="flex h-[93px] shrink-0 items-center border-b-[3px] border-[#e7e7ea] pl-[44px] pr-[33px]">
      <svg width="34" height="30" viewBox="0 0 34 30" fill="none" stroke="#b3b6bf" strokeWidth="2.500"><path d="M33 15H2M15 1 2 15l13 14" /></svg>
      <span className="ml-[32px] flex h-[33px] w-[114px] items-center justify-center rounded-[2px] border-2 border-[#8b8f98] text-[22px] leading-none text-[#555b66]">Workbook</span>
      <span className="ml-[11px] text-[32px] text-[#4b515b]">demo</span>
      <span className="ml-auto flex"><Kebab /></span>
    </div>
    <div className="flex h-[103px] shrink-0 items-center pb-[2px] pl-[37px] text-[24px] font-bold">
      <span className="w-[160px] text-[#5f6bb0]">Dashboard(4)</span>
      <span className="ml-[38px] h-[28px] w-[2px] bg-[#eeeef1]" />
      <span className="ml-[40px] w-[148px] text-[#c3c6cf]">Comment(0)</span>
      <span className="ml-[46px] h-[28px] w-[2px] bg-[#eeeef1]" />
      <svg className="ml-[37px]" width="28" height="26" viewBox="0 0 28 26" fill="#b0b3bc"><rect y="1" width="24" height="4" /><rect y="11" width="14" height="4" /><rect y="21" width="20" height="4" /><path d="M28 8v12l-7-6z" /></svg>
    </div>
    <div className="flex h-[66px] shrink-0 items-center bg-[#f5f5f6] pl-[42px]">
      <div className="flex h-[47px] w-[93px] rounded-[2px] border border-[#eeeef0]">
        <div className="flex w-[46px] items-center justify-center bg-[#414852]">
          <svg width="26" height="30" viewBox="0 0 26 30" fill="#ffffff"><rect width="26" height="30" /><g fill="#414852"><rect x="8" width="2" height="30" /><rect x="16" width="2" height="30" /><rect y="9" width="26" height="2" /><rect y="19" width="26" height="2" /></g></svg>
        </div>
        <div className="flex flex-1 flex-col items-center justify-center gap-[9px] bg-[#fafafa]">
          <span className="h-[2px] w-[30px] bg-[#b8bbc3]" /><span className="h-[2px] w-[30px] bg-[#b8bbc3]" /><span className="h-[2px] w-[30px] bg-[#b8bbc3]" />
        </div>
      </div>
      <span className="ml-[30px] flex"><Cyl c="#b7bac2" w={25} h={28} /></span>
      <span className="ml-[16px] text-[24px] text-[#a9adb6]">Datasource</span>
      <svg className="ml-[18px]" width="14" height="10" viewBox="0 0 14 10" fill="#a9adb6"><path d="M0 0h14L7 10z" /></svg>
      <span className="ml-[22px] h-[25px] w-[24px] rounded-[3px] border-2 border-[#c0c3ca]" />
      <span className="ml-[15px] text-[24px] text-[#a9adb6]">Shown only</span>
    </div>
    <div className="mx-[40px] mt-[48px] flex h-[48px] shrink-0 items-center border-b-2 border-[#d0d1d8]">
      <svg className="mb-[10px]" width="24" height="26" viewBox="0 0 24 26" fill="none" stroke="#b8bbc3" strokeWidth="2"><circle cx="10" cy="10" r="8" /><path d="M15 16l7 8" /></svg>
      <span className="mb-[10px] ml-[21px] text-[24px] text-[#b0b3bb]">Search</span>
    </div>
    <div className="relative h-[1453px] shrink-0 overflow-hidden pt-[29px]">
      <ListItem n={1} name="sales_analysis" active><div className="pt-[2px]"><ThumbOne /></div></ListItem>
      <ListItem n={2} name="test"><ThumbTwo /></ListItem>
      <ListItem n={3} name="test"><ThumbThree /></ListItem>
      <ListItem n={4} name="test"><ThumbFour /></ListItem>
      <div className="absolute right-0 top-0 h-full w-[37px] bg-[#fafafb]">
        <div className="ml-[8px] mt-[15px] h-[1266px] w-[20px] rounded-[10px] bg-[#cdced8]" />
      </div>
    </div>
    <button className="mx-[42px] mt-[50px] flex h-[62px] w-[490px] shrink-0 items-center justify-center gap-[26px] rounded-[6px] bg-[#4b5360] text-[25px] text-white">
      <svg width="24" height="24" viewBox="0 0 24 24" stroke="#ffffff" strokeWidth="2"><path d="M12 0v24M0 12h24" /></svg>
      Create dashboard
    </button>
  </aside>
);

const TitleBar = () => (
  <div className="flex h-[93px] shrink-0 items-center border-b-[3px] border-[#e5e5e8] bg-[#e5e5e8] pl-[31px] text-[#4b515b]">
    <svg width="38" height="30" viewBox="0 0 38 30" fill="none" stroke="#7b808a" strokeWidth="2"><rect x="1" y="1" width="36" height="28" /><rect x="7" y="6" width="9" height="7" /><rect x="7" y="17" width="9" height="7" /><rect x="21" y="17" width="10" height="7" /><path d="M21 7h10M21 12h10" /></svg>
    <span className="ml-[20px] mt-[2px] text-[31px]">sales_analysis</span>
    <span className="ml-[48px] mt-[3px] text-[24.500px] text-[#a3a6ae]">Please enter dashboard description.</span>
    <span className="ml-auto text-[25px] font-light text-[#b9bcc3]">Updated on 2018-10-30 14:40 <span className="font-normal text-[#8c9099]">by Polaris</span></span>
    <span className="ml-[27px] h-[34px] w-[2px] bg-[#d2d3d8]" />
    <span className="ml-[40px] flex"><Cyl c="#777c86" w={32} h={36} /></span>
    <span className="ml-[41px] h-[34px] w-[2px] bg-[#d2d3d8]" />
    <svg className="ml-[45px]" width="34" height="36" viewBox="0 0 34 36" fill="none" stroke="#6c717b" strokeWidth="2"><rect x="1" y="3" width="32" height="24" /><rect x="1" y="1" width="32" height="4" fill="#6c717b" /><path d="M10 22v-6M15 22V11M20 22v-9M24 22v-6M17 27v8M17 28l-7 7M17 28l7 7" /></svg>
    <span className="ml-[12px] text-[24px] text-[#5a606b]">Presentation view</span>
    <svg className="ml-[44px]" width="40" height="38" viewBox="0 0 40 38" fill="none" stroke="#5f646e" strokeWidth="2"><rect x="4" y="4" width="32" height="30" /><g fill="#e5e5e8"><rect x="1" y="1" width="6" height="6" /><rect x="33" y="1" width="6" height="6" /><rect x="1" y="31" width="6" height="6" /><rect x="33" y="31" width="6" height="6" /></g><path d="M14 27l2-7 9-11 5 4-9 11z" fill="#5f646e" stroke="none" /></svg>
    <span className="ml-[20px] text-[24px] text-[#5a606b]">Edit dashboard</span>
    <span className="ml-[54px] mr-[51px] flex"><Kebab c="#555b66" /></span>
  </div>
);

const Toolbar = () => (
  <div className="flex h-[121px] shrink-0 items-start justify-between pl-[18px] pr-[20px] pt-[21px]">
    <div className="flex h-[60px] w-[435px] items-center border-2 border-dashed border-[#e3e4e8] pb-[2px] pl-[20px] text-[24px] text-[#c9cbd2]">Please select data.</div>
    <button className="flex h-[60px] w-[254px] items-center rounded-[4px] bg-[#8e949d] pb-[3px] pl-[26px] text-[26px] text-white">
      <svg width="44" height="36" viewBox="0 0 44 36" fill="none" stroke="#ffffff" strokeWidth="2"><path d="M30 26H1V1h38v20" /><path d="M8 14v6M14 8v14M20 12v8M27 10v12" strokeWidth="3" /><path d="M37 23v13M30 30h13" strokeWidth="3" /></svg>
      <span className="ml-[11px]">Chart</span>
      <svg className="ml-[62px]" width="18" height="12" viewBox="0 0 18 12" fill="none" stroke="#d7d9dd" strokeWidth="2"><path d="M1 1l8 9 8-9" /></svg>
    </button>
  </div>
);

const MapControls = () => (
  <>
    <div className="absolute left-[12px] top-[12px] flex h-[90px] w-[50px] flex-col gap-[2px] rounded-[7px] bg-[#777777] p-[6px] text-[30px] font-bold leading-none text-white">
      <div className="flex flex-1 items-center justify-center rounded-t-[3px] bg-[#3f5a84]">+</div>
      <div className="flex flex-1 items-center justify-center rounded-b-[3px] bg-[#3f5a84]">−</div>
    </div>
    <div className="absolute left-[12px] top-[108px] h-[408px] w-[50px] rounded-[7px] bg-[#7a7a7a] px-[6px] pt-[314px]">
      <div className="h-[20px] rounded-[2px] bg-[#3f5a84]" />
    </div>
    <div className="absolute left-[12px] top-[1684px] h-[50px] w-[49px] rounded-[6px] bg-[#777777] p-[6px]">
      <div className="flex h-full items-start justify-center rounded-[3px] bg-[#3f5a84] text-[28px] font-bold leading-[34px] text-white">i</div>
    </div>
  </>
);

const PROFIT: [string, string][] = [
  ["#fb6e3d", "14,416.25 ~ 21,655.00"],
  ["#f28a24", "7,177.50 ~ 14,416.25"],
  ["#fab52a", "-61.25 ~ 7,177.50"],
  ["#fde047", "-7,300.00 ~ -61.25"],
  ["#f5f1bb", "-7,300.00 ~ -7,300.00"],
];
const MapLegend = () => (
  <div className="absolute left-[1672px] top-[1215px] h-[491px] w-[403px] rounded-[3px] bg-white pl-[43px] pt-[44px] text-[24px] text-[#4b515b] shadow-[0_0_2px_#d8d8d8]">
    <div className="text-[30px] font-bold leading-[40px]">Profit</div>
    <div className="mt-[26px] text-[26px] leading-[38px] text-[#90969f]">symbol by SUM(Profit)</div>
    <div className="mt-[14px] flex flex-col gap-[18px]">
      {PROFIT.map(([c, t]) => (
        <div key={c} className="flex h-[42px] items-center">
          <span className="h-[28px] w-[28px] rounded-full" style={{ backgroundColor: c }} />
          <span className="ml-[12px] text-[25px]">{t}</span>
        </div>
      ))}
    </div>
  </div>
);

const RightPanel = () => (
  <div className="w-[1124px] shrink-0 bg-white">
    <MainChart />
    <div className="flex h-[78px] items-center gap-[40px] pb-[4px] pl-[64px] text-[26.500px] text-[#5a606b]">
      {[["#f28a24", "Central"], ["#fab52a", "East"], ["#f55545", "South"], ["#f5f1bb", "West"]].map(([c, t]) => (
        <div key={t} className="flex items-center gap-[21px]">
          <span className="h-[28px] w-[28px] rounded-full" style={{ backgroundColor: c }} />
          {t}
        </div>
      ))}
    </div>
    <Donut />
  </div>
);

export default function App() {
  return (
    <div className="relative flex h-[2078px] w-[3840px] flex-col overflow-hidden bg-white font-['Noto_Sans_CJK_KR','Noto_Sans',sans-serif]">
      <header className="flex h-[113px] shrink-0 items-center border-b-[3px] border-t-[3px] border-b-[#dcdde3] border-t-[#b7b7b7] pl-[46px] pr-[45px]">
        <svg width="32" height="24" viewBox="0 0 32 24" fill="#555b66"><rect width="32" height="4" /><rect y="10" width="32" height="4" /><rect y="20" width="32" height="4" /></svg>
        <div className="ml-[25px] flex origin-left scale-x-[0.9] items-center text-[40px] font-bold leading-none tracking-[1.500px]">
          <span className="text-[#5a6270]">METATRON</span>
          <span className="ml-[6px] text-[#c7cad4]">DISCOVERY</span>
        </div>
        <div className="ml-auto flex h-[67px] w-[67px] items-center justify-center rounded-full bg-[#6d7881]">
          <svg width="30" height="36" viewBox="0 0 30 36" fill="none" stroke="#cdd2d6" strokeWidth="1.800"><circle cx="15" cy="10" r="8" /><path d="M10 18 3 35h24l-7-17" /></svg>
        </div>
      </header>
      <div className="flex min-h-0 flex-1">
        <Sidebar />
        <main className="flex min-w-0 flex-1 flex-col">
          <TitleBar />
          <div className="flex min-h-0 flex-1 flex-col border-l-[5px] border-[#eeeef0]">
            <Toolbar />
            <div className="flex h-[1746px] shrink-0 pl-[20px]">
              <div className="relative h-[1746px] w-[2116px] shrink-0 overflow-hidden">
                <NorthAmerica />
                <MapControls />
                <MapLegend />
              </div>
              <RightPanel />
            </div>
          </div>
        </main>
      </div>
      <div className="absolute bottom-0 left-0 flex h-[35px] w-[1276px] items-center rounded-tr-[8px] bg-white pl-[5px] text-[24px] leading-none text-[#555b66] shadow-[0_-1px_1px_#cccccc]">javascript:</div>
    </div>
  );
}
